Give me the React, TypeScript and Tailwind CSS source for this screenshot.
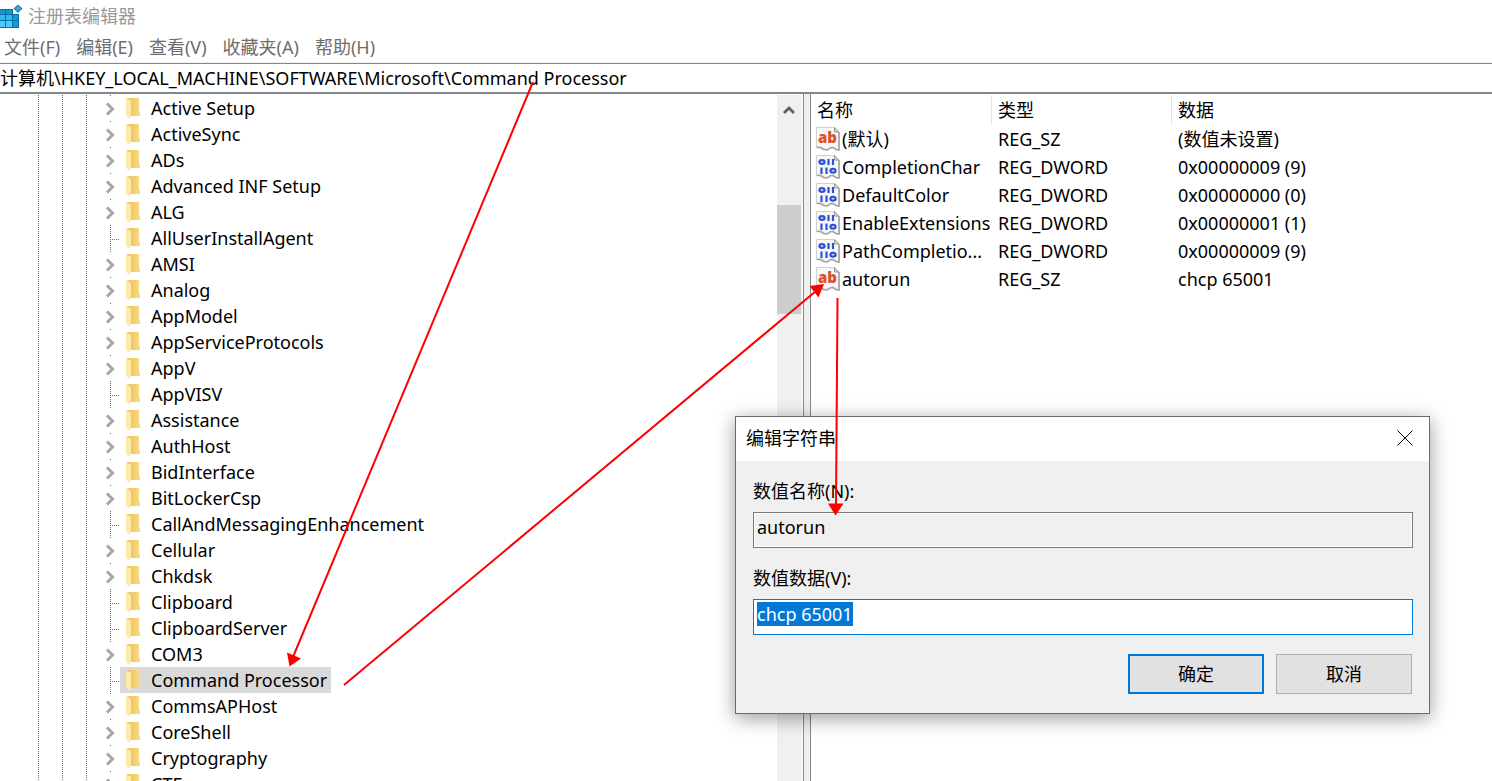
import { useEffect, useRef } from 'react'

const menus = ['文件(F)', '编辑(E)', '查看(V)', '收藏夹(A)', '帮助(H)']

const keys = [
  { name: 'Active Setup', children: true },
  { name: 'ActiveSync', children: true },
  { name: 'ADs', children: true },
  { name: 'Advanced INF Setup', children: true },
  { name: 'ALG', children: true },
  { name: 'AllUserInstallAgent', children: false },
  { name: 'AMSI', children: true },
  { name: 'Analog', children: true },
  { name: 'AppModel', children: true },
  { name: 'AppServiceProtocols', children: true },
  { name: 'AppV', children: true },
  { name: 'AppVISV', children: false },
  { name: 'Assistance', children: true },
  { name: 'AuthHost', children: true },
  { name: 'BidInterface', children: true },
  { name: 'BitLockerCsp', children: true },
  { name: 'CallAndMessagingEnhancement', children: false },
  { name: 'Cellular', children: true },
  { name: 'Chkdsk', children: true },
  { name: 'Clipboard', children: false },
  { name: 'ClipboardServer', children: false },
  { name: 'COM3', children: true },
  { name: 'Command Processor', children: false },
  { name: 'CommsAPHost', children: true },
  { name: 'CoreShell', children: true },
  { name: 'Cryptography', children: true },
  { name: 'CTF', children: true },
]

const values = [
  { name: '(默认)', type: 'REG_SZ', data: '(数值未设置)' },
  { name: 'CompletionChar', type: 'REG_DWORD', data: '0x00000009 (9)' },
  { name: 'DefaultColor', type: 'REG_DWORD', data: '0x00000000 (0)' },
  { name: 'EnableExtensions', type: 'REG_DWORD', data: '0x00000001 (1)' },
  { name: 'PathCompletio...', type: 'REG_DWORD', data: '0x00000009 (9)' },
  { name: 'autorun', type: 'REG_SZ', data: 'chcp 65001' },
]

function AppIcon() {
  return (
    <svg width="24" height="24" viewBox="0 0 24 24" className="shrink-0">
      <path d="M0 5h13v5h6v14H0z" fill="#0b6ea6" />
      <path d="M0 6h5v4H0zM6 6h6v4H6z" fill="#1797cf" />
      <path d="M0 11h5v5H0zM6 11h6v5H6z" fill="#2fb9ec" />
      <path d="M13 11h5v5h-5zM13 17h5v6h-5z" fill="#149bd6" />
      <path d="M0 17h5v6H0zM6 17h6v6H6z" fill="#4fcbf8" />
      <path d="M18 0.500l4.500 4-4.500 4.500-4.500-4.500z" fill="#1c86b8" />
      <path d="M18 2.200l2.600 2.300-2.600 2.500-2.600-2.500z" fill="#4aa9d2" />
    </svg>
  )
}

// Dotted guide lines, plus the chevron of a key that can be expanded
function TreeGuides({ expandable }: { expandable: boolean }) {
  return (
    <svg width="94" height="26" viewBox="0 0 94 26" className="shrink-0" shapeRendering="crispEdges">
      <path d="M12.500 0v26M36.500 0v26M60.500 0v26" stroke="#6e6e6e" strokeDasharray="1 1" />
      {expandable ? (
        <>
          <path d="M84 0h1v1h-1z" fill="#6e6e6e" />
          <path d="M81 8.500l5.500 5.500-5.500 5.500" fill="none" stroke="#a6a6a6" strokeWidth="3" shapeRendering="auto" />
        </>
      ) : (
        <path d="M84.500 0v26M84 14.500h10" stroke="#6e6e6e" strokeDasharray="1 1" />
      )}
    </svg>
  )
}

function FolderIcon() {
  return (
    <svg width="14" height="24" viewBox="0 0 14 24" className="shrink-0">
      <path d="M1 2h12v13l1 1v4H4z" fill="url(#folder)" />
      <path d="M0 2l5 3v14l-1 4-4-3z" fill="#ffe9a6" />
    </svg>
  )
}

function ValueIcon({ type }: { type: string }) {
  return (
    <svg width="24" height="24" viewBox="0 0 24 24" className="shrink-0">
      <path
        d="M0.500 0.500h18l4.500 4.500v18l-3-0.500-3-2.500-3 0.500-2 2-4-0.500-3-2h-4.500z"
        fill="#f8f8f8"
        stroke="#d0d0d0"
      />
      <path d="M0.500 20.500h4l3 2 4 0.500 2.500-2 3-0.500 3 2 3 0.500V5" fill="none" stroke="#a3a3a3" strokeWidth="1.600" />
      <path d="M18.500 0.500v4.500H23z" fill="#d6d6d6" stroke="#9a9a9a" />
      {type === 'REG_SZ' ? (
        <text x="2" y="16" fontSize="15" fontWeight="800" fill="#d9532f" fontFamily="Open Sans, sans-serif">
          ab
        </text>
      ) : (
        <g fill="none" stroke="#2f50d8" strokeWidth="2.200">
          <ellipse cx="6" cy="7" rx="2.600" ry="1.900" />
          <path d="M12.500 4v6M17 4v6M5.500 12.500v6.500M10.500 12.500v6.500" />
          <ellipse cx="17" cy="15.700" rx="2.600" ry="1.900" />
        </g>
      )}
    </svg>
  )
}

function KeyTree() {
  return (
    <div className="flex min-w-0 overflow-hidden border-r border-[#828790] pt-px pr-px">
      <ul className="min-w-0 flex-1 pl-[26px]">
        {keys.map((key) => (
          <li key={key.name} className="flex h-[26px]">
            <TreeGuides expandable={key.children} />
            <button
              type="button"
              className={
                key.name === 'Command Processor'
                  ? 'flex items-center gap-[11px] bg-[#d9d9d9] pr-1 pl-1.5'
                  : 'flex items-center gap-[11px] pr-1 pl-1.5'
              }
            >
              <FolderIcon />
              <span className="whitespace-nowrap">{key.name}</span>
            </button>
          </li>
        ))}
      </ul>

      {/* Scrollbar */}
      <div className="flex w-[25px] shrink-0 flex-col bg-[#f0f0f0] pr-px">
        <button type="button" aria-label="Scroll up" className="flex h-[30px] items-center justify-center">
          <svg width="14" height="12" viewBox="0 0 14 12">
            <path d="M2 9l5-5 5 5" fill="none" stroke="#606060" strokeWidth="2.800" />
          </svg>
        </button>
        <div className="mt-20 h-[109px] bg-[#cdcdcd]" />
      </div>
    </div>
  )
}

function ValueTable() {
  return (
    <div className="min-w-0 overflow-hidden border-l border-[#828790] pt-px">
      <table className="w-full table-fixed border-separate border-spacing-0 text-left">
        <thead>
          <tr className="h-[30px]">
            <th className="w-[181px] border-r border-[#e5e5e5] pl-1.5 font-normal">名称</th>
            <th className="w-[180px] border-r border-[#e5e5e5] pl-1.5 font-normal">类型</th>
            <th className="pl-1.5 font-normal">数据</th>
          </tr>
        </thead>
        <tbody>
          {values.map((value) => (
            <tr key={value.name} className="h-7">
              <td className="pl-[5px]">
                <div className="flex items-center gap-0.5">
                  <ValueIcon type={value.type} />
                  <span className="whitespace-nowrap">{value.name}</span>
                </div>
              </td>
              <td className="pl-1.5">{value.type}</td>
              <td className="pl-1.5">{value.data}</td>
            </tr>
          ))}
        </tbody>
      </table>
    </div>
  )
}

function EditStringDialog() {
  const dataRef = useRef<HTMLInputElement>(null)

  useEffect(() => {
    dataRef.current?.focus()
    dataRef.current?.select()
  }, [])

  return (
    <div
      role="dialog"
      aria-labelledby="dialog-title"
      className="absolute top-[416px] left-[735px] w-[695px] border border-[#6b6b6b] bg-[#f0f0f0] shadow-[0_4px_18px_rgba(0,0,0,0.4)]"
    >
      <div className="flex h-11 items-center justify-between bg-white pr-4 pb-0.5 pl-2.5">
        <h2 id="dialog-title">编辑字符串</h2>
        <button type="button" aria-label="关闭">
          <svg width="16" height="16" viewBox="0 0 16 16">
            <path d="M0.500 0.500l15 15M15.500 0.500l-15 15" stroke="#000" />
          </svg>
        </button>
      </div>

      <form className="px-4 pt-[18px] pb-[19px] pl-[17px]" onSubmit={(e) => e.preventDefault()}>
        <label htmlFor="value-name" className="block">数值名称(N):</label>
        <input
          id="value-name"
          readOnly
          defaultValue="autorun"
          className="mt-[9px] block h-9 w-full border border-[#7a7a7a] bg-[#f0f0f0] px-[3px] pb-1.5 inset-ring inset-ring-white outline-none"
        />
        <label htmlFor="value-data" className="mt-[18px] block">数值数据(V):</label>
        <input
          id="value-data"
          ref={dataRef}
          defaultValue="chcp 65001"
          className="mt-[9px] block h-9 w-full border border-[#0078d7] bg-white px-[3px] pb-1.5 outline-none selection:bg-[#0078d7] selection:text-white"
        />
        <div className="mt-[19px] flex justify-end gap-3 pr-px">
          <button type="submit" className="h-10 w-[136px] border-2 border-[#0078d7] bg-[#e1e1e1]">
            确定
          </button>
          <button type="button" className="h-10 w-[136px] border border-[#adadad] bg-[#e1e1e1]">
            取消
          </button>
        </div>
      </form>
    </div>
  )
}

// Red arrows: address -> key -> value -> dialog
function Arrows() {
  return (
    <svg className="pointer-events-none absolute inset-0 size-full" aria-hidden="true">
      <g stroke="#f00" strokeWidth="2">
        <path d="M533 82L293 657" />
        <path d="M344 685L816 291" />
        <path d="M837.500 298L836 505" />
      </g>
      <g fill="#f00">
        <path d="M287 652.500L301 658.500L289.500 666.500z" />
        <path d="M809.500 286L824 284L818.500 297.500z" />
        <path d="M828 503.500H843.500L835.500 515.500z" />
      </g>
    </svg>
  )
}

export default function App() {
  return (
    <div className="relative flex h-screen flex-col overflow-hidden bg-white font-['Noto_Sans','Noto_Sans_CJK_SC',sans-serif] text-[18px] leading-6 text-black">
      <svg width="0" height="0" className="absolute" aria-hidden="true">
        <linearGradient id="folder">
          <stop offset="0.300" stopColor="#ecc765" />
          <stop offset="1" stopColor="#f9dc86" />
        </linearGradient>
      </svg>

      {/* Title bar */}
      <header className="flex h-8 shrink-0 items-center gap-1 text-[#999]">
        <AppIcon />
        <h1>注册表编辑器</h1>
      </header>

      {/* Menu bar */}
      <nav className="flex h-[31px] shrink-0 items-center gap-4 border-b border-[#f0f0f0] pl-1 text-[#6d6d6d]">
        {menus.map((menu) => (
          <button key={menu} type="button">{menu}</button>
        ))}
      </nav>

      <input
        aria-label="地址"
        defaultValue="计算机\HKEY_LOCAL_MACHINE\SOFTWARE\Microsoft\Command Processor"
        className="h-[31px] w-full shrink-0 border-t border-b-2 border-[#828790] pb-0.5 outline-none"
      />

      <main className="grid min-h-0 flex-1 grid-cols-[804fr_682fr] gap-x-1.5 bg-[#f0f0f0] *:bg-white">
        <KeyTree />
        <ValueTable />
      </main>

      <EditStringDialog />
      <Arrows />
    </div>
  )
}
